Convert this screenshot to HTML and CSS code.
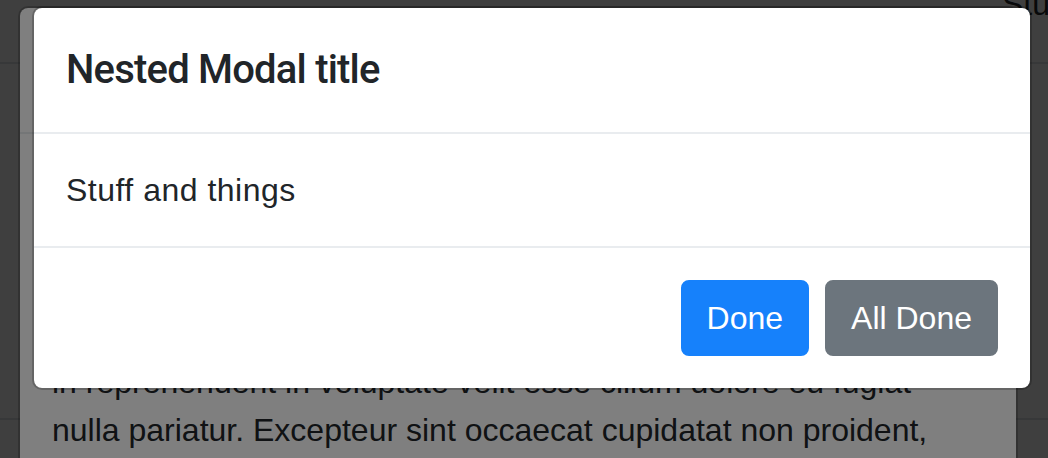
FILE: index.html
```html
<!DOCTYPE html>
<html lang="en">
<head>
<meta charset="utf-8">
<title>Nested Modal</title>
<link rel="stylesheet" href="styles.css">
</head>
<body>
<div class="page">
  <div class="page-top"><span class="page-text">Stuff and things</span></div>
  <div class="page-mid"></div>
  <div class="page-bottom"></div>
</div>

<div class="backdrop"></div>

<div class="modal modal-first">
  <div class="modal-header"><h5 class="modal-title">Modal title</h5></div>
  <div class="modal-body">
    <span class="line">Lorem ipsum dolor sit amet, consectetur adipiscing elit, sed do</span>
    <span class="line">eiusmod tempor incididunt ut labore et dolore magna aliqua. Ut</span>
    <span class="line">enim ad minim veniam, quis nostrud exercitation ullamco laboris</span>
    <span class="line">nisi ut aliquip ex ea commodo consequat. Duis aute irure dolor</span>
    <span class="line">in reprehenderit in voluptate velit esse cillum dolore eu fugiat</span>
    <span class="line">nulla pariatur. Excepteur sint occaecat cupidatat non proident,</span>
  </div>
</div>

<div class="backdrop"></div>

<div class="modal modal-nested">
  <div class="modal-header"><h5 class="modal-title">Nested Modal title</h5></div>
  <div class="modal-body"><p class="body-text">Stuff and things</p></div>
  <div class="modal-footer">
    <button class="btn btn-primary" type="button">Done</button>
    <button class="btn btn-secondary" type="button">All Done</button>
  </div>
</div>
</body>
</html>
```

FILE: styles.css
```css
* { box-sizing: border-box; }

html, body {
  margin: 0;
  padding: 0;
  width: 1048px;
  height: 458px;
  overflow: hidden;
}

body {
  position: relative;
  background: #fff;
  color: #212529;
  font-family: "Liberation Sans", Arial, sans-serif;
  font-size: 32px;
  line-height: 48px;
}

.page {
  display: flex;
  flex-direction: column;
  height: 458px;
}

.page-top {
  height: 64px;
  border-bottom: 2px solid #dee2e6;
  padding-left: 1002px;
  white-space: nowrap;
  overflow: hidden;
}

.page-text {
  display: block;
  margin-top: -20px;
}

.page-mid {
  height: 356px;
  border-bottom: 2px solid #dee2e6;
}

.page-bottom { flex: 1; }

.backdrop {
  position: absolute;
  inset: 0;
  background: rgba(0, 0, 0, 0.5);
}

.modal {
  position: absolute;
  width: 1000px;
  background: #fff;
  background-clip: padding-box;
  border: 2px solid rgba(0, 0, 0, 0.2);
  border-radius: 10px;
  display: flex;
  flex-direction: column;
}

.modal-first {
  left: 18px;
  top: 6px;
  height: 452px;
  border-bottom-width: 0;
  border-bottom-left-radius: 0;
  border-bottom-right-radius: 0;
  overflow: hidden;
}

.modal-nested {
  left: 32px;
  top: 6px;
}

.modal-header {
  padding: 32px;
  border-bottom: 2px solid #e9ecef;
}

.modal-title {
  margin: 0;
  font-family: Roboto, "Liberation Sans", Arial, sans-serif;
  font-size: 40px;
  line-height: 60px;
  font-weight: 500;
  letter-spacing: -0.8px;
  color: #212529;
}

.modal-body {
  padding: 32px;
  display: flex;
  flex-direction: column;
}

.line {
  display: block;
  white-space: nowrap;
}

.body-text {
  margin: 0;
  letter-spacing: 0.5px;
}

.modal-footer {
  display: flex;
  justify-content: flex-end;
  align-items: center;
  gap: 16px;
  padding: 32px;
  border-top: 2px solid #e9ecef;
}

.btn {
  font-family: inherit;
  font-size: 32px;
  line-height: 48px;
  padding: 12px 24px;
  border: 2px solid transparent;
  border-radius: 8px;
  color: #fff;
  font-weight: 400;
  margin: 0;
}

.btn-primary {
  background: #1681fb;
  border-color: #1681fb;
}

.btn-secondary {
  background: #6c757d;
  border-color: #6c757d;
}
```
